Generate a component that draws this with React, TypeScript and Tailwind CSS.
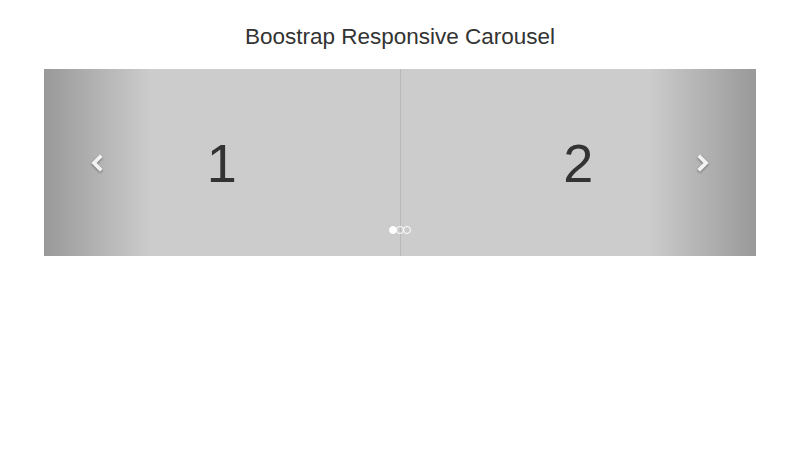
import { useState } from "react";

const slides = ["1", "2", "3", "4", "5", "6"];

function Chevron({ dir }: { dir: "left" | "right" }) {
  return (
    <svg width="16" height="18" viewBox="0 0 16 18" className="drop-shadow-[0_1px_1px_rgba(0,0,0,0.4)]">
      <polyline
        points={dir === "left" ? "11,3 5,9 11,15" : "5,3 11,9 5,15"}
        fill="none"
        stroke="#f2f2f2"
        strokeWidth="3.8"
        strokeLinecap="square"
      />
    </svg>
  );
}

export default function App() {
  const [page, setPage] = useState(0);
  const pages = 3;
  const shown = slides.slice(page * 2, page * 2 + 2);

  return (
    <div className="min-h-[450px] bg-white font-['Liberation_Sans',Arial,sans-serif] text-[#333]">
      <h1 className="pt-[22px] text-center text-[22.5px] leading-[30px]">Boostrap Responsive Carousel</h1>

      <div className="relative mx-[44px] mt-[17px] h-[187px] overflow-hidden bg-[#ccc]">
        {/* Slides */}
        <div className="flex h-full">
          {shown.map((s, i) => (
            <div
              key={s}
              className={`flex flex-1 items-center justify-center ${i === 0 ? "border-r border-[#b8b8b8]" : ""}`}
            >
              <span className="text-[54px] leading-none">{s}</span>
            </div>
          ))}
        </div>

        {/* Controls */}
        <button
          onClick={() => setPage((page + pages - 1) % pages)}
          className="absolute inset-y-0 left-0 flex w-[15%] items-center justify-center bg-gradient-to-r from-black/25 to-black/0"
        >
          <Chevron dir="left" />
        </button>
        <button
          onClick={() => setPage((page + 1) % pages)}
          className="absolute inset-y-0 right-0 flex w-[15%] items-center justify-center bg-gradient-to-l from-black/25 to-black/0"
        >
          <Chevron dir="right" />
        </button>

        {/* Indicators */}
        <div className="absolute bottom-[22px] left-0 right-0 flex justify-center">
          {Array.from({ length: pages }, (_, i) => (
            <button
              key={i}
              onClick={() => setPage(i)}
              className={`mx-[-0.5px] h-[8px] w-[8px] rounded-full border border-white ${
                i === page ? "bg-white" : "bg-transparent"
              }`}
            />
          ))}
        </div>
      </div>
    </div>
  );
}
